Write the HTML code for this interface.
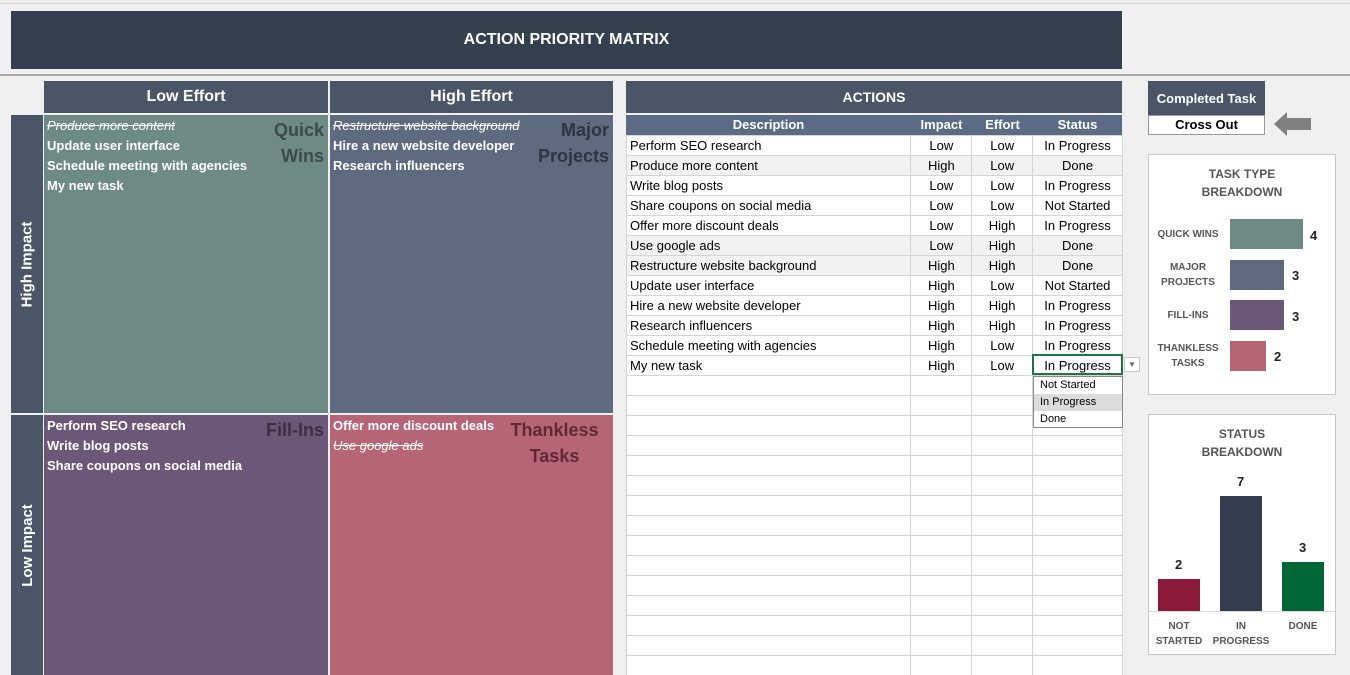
<!DOCTYPE html>
<html style="width:1350px;height:675px;overflow:hidden"><head><meta charset="utf-8"><style>
*{margin:0;padding:0;box-sizing:border-box}
body{width:1350px;height:675px;background:#f0f0f0;font-family:"Liberation Sans",Arial,sans-serif;position:relative;overflow:hidden;color:#000}
.a{position:absolute}
.hd{background:#4a5567;color:#fff;font-weight:bold;display:flex;align-items:center;justify-content:center}
.q{position:absolute;color:#fff;font-weight:bold;font-size:13px;line-height:20px;padding:1px 3px}
.q s{font-weight:normal;font-style:italic}
.ql{position:absolute;font-weight:bold;font-size:18px;line-height:26px;text-align:right}
table{border-collapse:collapse;font-size:13px}
td{height:20px;border:1px solid #d4d4d4;padding:0 3px;white-space:nowrap;background:#fff}
td.c{text-align:center}
tr.g td{background:#f2f2f2}
.lbl{position:absolute;font-size:10px;font-weight:bold;color:#555;text-align:center;line-height:15px}
.num{position:absolute;font-size:13px;font-weight:bold;color:#222}
</style></head><body>
<div class="a" style="left:0;top:3px;width:1350px;height:1px;background:#d8d8d8"></div>
<div class="a hd" style="left:11px;top:11px;width:1111px;height:58px;background:#343f50;font-size:16px">ACTION PRIORITY MATRIX</div>
<div class="a" style="left:0;top:74px;width:1350px;height:2px;background:#a6a6a6"></div>

<div class="a hd" style="left:44px;top:81px;width:284px;height:32px;font-size:16px">Low Effort</div>
<div class="a hd" style="left:330px;top:81px;width:283px;height:32px;font-size:16px">High Effort</div>
<div class="a hd" style="left:11px;top:115px;width:32px;height:298px"><span style="transform:rotate(-90deg);white-space:nowrap;font-size:15px">High Impact</span></div>
<div class="a hd" style="left:11px;top:415px;width:32px;height:260px"><span style="transform:rotate(-90deg);white-space:nowrap;font-size:15px">Low Impact</span></div>

<div class="a" style="left:44px;top:115px;width:284px;height:298px;background:#6d8a85"></div>
<div class="a" style="left:330px;top:115px;width:283px;height:298px;background:#5e6a80"></div>
<div class="a" style="left:44px;top:415px;width:284px;height:260px;background:#6b5878"></div>
<div class="a" style="left:330px;top:415px;width:283px;height:260px;background:#b66577"></div>

<div class="q" style="left:44px;top:115px"><s>Produce more content</s><br>Update user interface<br>Schedule meeting with agencies<br>My new task</div>
<div class="ql" style="left:240px;top:117px;width:84px;color:#3c4a4a">Quick<br>Wins</div>
<div class="q" style="left:330px;top:115px"><s>Restructure website background</s><br>Hire a new website developer<br>Research influencers</div>
<div class="ql" style="left:500px;top:117px;width:109px;color:#2e3442">Major<br>Projects</div>
<div class="q" style="left:44px;top:415px">Perform SEO research<br>Write blog posts<br>Share coupons on social media</div>
<div class="ql" style="left:240px;top:417px;width:84px;color:#3b2f45">Fill-Ins</div>
<div class="q" style="left:330px;top:415px">Offer more discount deals<br><s>Use google ads</s></div>
<div class="ql" style="left:500px;top:417px;width:109px;text-align:center;color:#5e2a36">Thankless<br>Tasks</div>

<div class="a hd" style="left:626px;top:81px;width:496px;height:32px;font-size:14px">ACTIONS</div>
<div class="a" style="left:626px;top:115px;width:496px;height:20px;background:#5b6b85;color:#fff;font-weight:bold;font-size:13px;line-height:20px">
<span class="a" style="left:0;width:285px;text-align:center">Description</span>
<span class="a" style="left:285px;width:61px;text-align:center">Impact</span>
<span class="a" style="left:346px;width:61px;text-align:center">Effort</span>
<span class="a" style="left:407px;width:89px;text-align:center">Status</span></div>
<table class="a" style="left:626px;top:135px;width:497px">
<colgroup><col style="width:285px"><col style="width:61px"><col style="width:61px"><col style="width:90px"></colgroup>
<tr><td>Perform SEO research</td><td class="c">Low</td><td class="c">Low</td><td class="c">In Progress</td></tr>
<tr class="g"><td>Produce more content</td><td class="c">High</td><td class="c">Low</td><td class="c">Done</td></tr>
<tr><td>Write blog posts</td><td class="c">Low</td><td class="c">Low</td><td class="c">In Progress</td></tr>
<tr><td>Share coupons on social media</td><td class="c">Low</td><td class="c">Low</td><td class="c">Not Started</td></tr>
<tr><td>Offer more discount deals</td><td class="c">Low</td><td class="c">High</td><td class="c">In Progress</td></tr>
<tr class="g"><td>Use google ads</td><td class="c">Low</td><td class="c">High</td><td class="c">Done</td></tr>
<tr class="g"><td>Restructure website background</td><td class="c">High</td><td class="c">High</td><td class="c">Done</td></tr>
<tr><td>Update user interface</td><td class="c">High</td><td class="c">Low</td><td class="c">Not Started</td></tr>
<tr><td>Hire a new website developer</td><td class="c">High</td><td class="c">High</td><td class="c">In Progress</td></tr>
<tr><td>Research influencers</td><td class="c">High</td><td class="c">High</td><td class="c">In Progress</td></tr>
<tr><td>Schedule meeting with agencies</td><td class="c">High</td><td class="c">Low</td><td class="c">In Progress</td></tr>
<tr><td>My new task</td><td class="c">High</td><td class="c">Low</td><td class="c">In Progress</td></tr>
<tr><td></td><td></td><td></td><td></td></tr><tr><td></td><td></td><td></td><td></td></tr>
<tr><td></td><td></td><td></td><td></td></tr><tr><td></td><td></td><td></td><td></td></tr>
<tr><td></td><td></td><td></td><td></td></tr><tr><td></td><td></td><td></td><td></td></tr>
<tr><td></td><td></td><td></td><td></td></tr><tr><td></td><td></td><td></td><td></td></tr>
<tr><td></td><td></td><td></td><td></td></tr><tr><td></td><td></td><td></td><td></td></tr>
<tr><td></td><td></td><td></td><td></td></tr><tr><td></td><td></td><td></td><td></td></tr>
<tr><td></td><td></td><td></td><td></td></tr><tr><td></td><td></td><td></td><td></td></tr>
<tr><td></td><td></td><td></td><td></td></tr>
</table>
<div class="a" style="left:1032px;top:354px;width:91px;height:21px;border:2px solid #217346"></div>
<div class="a" style="left:1124px;top:357px;width:16px;height:15px;border:1px solid #c8c8c8;background:#fff;font-size:8px;color:#666;text-align:center;line-height:14px">▼</div>
<div class="a" style="left:1033px;top:376px;width:90px;height:52px;border:1px solid #888;background:#fff;font-size:11px;line-height:17px">
<div style="padding-left:6px">Not Started</div><div style="padding-left:6px;background:#dcdcdc">In Progress</div><div style="padding-left:6px">Done</div></div>

<div class="a hd" style="left:1148px;top:81px;width:117px;height:34px;font-size:13px">Completed Task</div>
<div class="a" style="left:1148px;top:115px;width:117px;height:20px;background:#fff;border:1px solid #999;font-size:13px;font-weight:bold;text-align:center;line-height:18px">Cross Out</div>
<svg class="a" style="left:1274px;top:112px" width="38" height="24"><polygon points="0,12 13,0 13,6 37,6 37,18 13,18 13,24" fill="#808080"/></svg>

<div class="a" style="left:1148px;top:154px;width:188px;height:241px;background:#fff;border:1px solid #c8c8c8"></div>
<div class="lbl" style="left:1148px;top:165px;width:188px;font-size:12px;line-height:18px">TASK TYPE<br>BREAKDOWN</div>
<div class="lbl" style="left:1150px;top:227px;width:76px">QUICK WINS</div>
<div class="a" style="left:1230px;top:219px;width:73px;height:30px;background:#6d8a85"></div><div class="num" style="left:1310px;top:228px">4</div>
<div class="lbl" style="left:1150px;top:260px;width:76px">MAJOR<br>PROJECTS</div>
<div class="a" style="left:1230px;top:260px;width:54px;height:30px;background:#5e6a80"></div><div class="num" style="left:1292px;top:268px">3</div>
<div class="lbl" style="left:1150px;top:308px;width:76px">FILL-INS</div>
<div class="a" style="left:1230px;top:300px;width:54px;height:30px;background:#6b5878"></div><div class="num" style="left:1292px;top:309px">3</div>
<div class="lbl" style="left:1150px;top:341px;width:76px">THANKLESS<br>TASKS</div>
<div class="a" style="left:1230px;top:341px;width:36px;height:30px;background:#b66577"></div><div class="num" style="left:1274px;top:349px">2</div>

<div class="a" style="left:1148px;top:414px;width:188px;height:241px;background:#fff;border:1px solid #c8c8c8"></div>
<div class="lbl" style="left:1148px;top:425px;width:188px;font-size:12px;line-height:18px">STATUS<br>BREAKDOWN</div>
<div class="a" style="left:1158px;top:579px;width:42px;height:32px;background:#8b1a3a"></div><div class="num" style="left:1175px;top:557px">2</div>
<div class="a" style="left:1220px;top:496px;width:42px;height:115px;background:#333d4f"></div><div class="num" style="left:1237px;top:474px">7</div>
<div class="a" style="left:1282px;top:562px;width:42px;height:49px;background:#006633"></div><div class="num" style="left:1299px;top:540px">3</div>
<div class="a" style="left:1149px;top:611px;width:186px;height:1px;background:#ddd"></div>
<div class="lbl" style="left:1150px;top:619px;width:58px">NOT<br>STARTED</div>
<div class="lbl" style="left:1212px;top:619px;width:58px">IN<br>PROGRESS</div>
<div class="lbl" style="left:1274px;top:619px;width:58px">DONE</div>
</body></html>
